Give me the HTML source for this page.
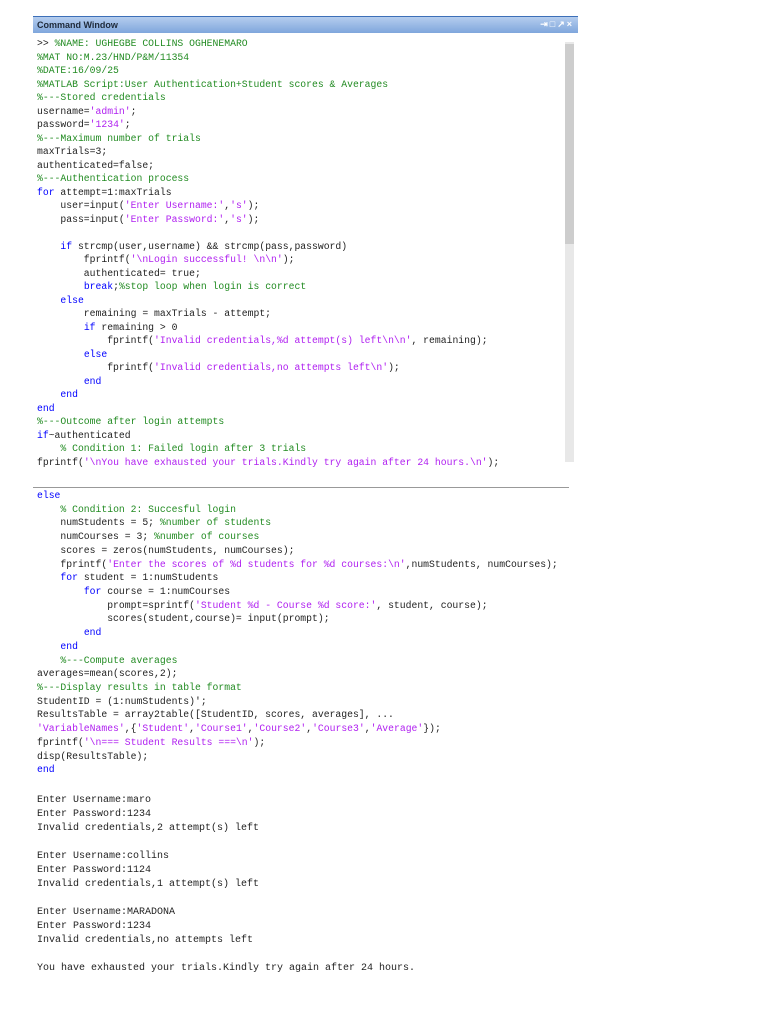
<!DOCTYPE html>
<html><head><meta charset="utf-8"><style>
body{margin:0;background:#fff;width:768px;height:1024px;position:relative;overflow:hidden;font-family:"Liberation Mono",monospace;}
.l{position:absolute;left:37px;font-size:9.75px;white-space:pre;color:#222;line-height:12px;}
.o{font-size:10px;}
.c{color:#228b22}.s{color:#b020f0}.k{color:#0000ff}
#hdr{position:absolute;left:33px;top:16px;width:545px;height:17px;background:linear-gradient(#b5cdee,#7fa6dc);border-top:1px solid #3d6fb8;box-sizing:border-box;font-family:"Liberation Sans",sans-serif;font-size:9px;font-weight:bold;color:#1e2a3a;padding:3px 0 0 4px;}
#ic{position:absolute;right:4px;top:2px;color:#fff;font-size:9px;letter-spacing:2px}
#sb{position:absolute;left:565px;top:42px;width:9px;height:420px;background:#e8e8e8}
#th{position:absolute;left:565px;top:44px;width:9px;height:200px;background:#cdcdcd}
#b2{position:absolute;left:33px;top:487px;width:536px;height:0;border-top:1px solid #999}
</style></head><body>
<div id="hdr">Command Window<span id="ic">⇥□↗×</span></div>
<div id="sb"></div><div id="th"></div>
<div id="b2"></div>
<div class="l" style="top:38px">&gt;&gt; <span class="c">%NAME: UGHEGBE COLLINS OGHENEMARO</span></div>
<div class="l c" style="top:51.5px">%MAT NO:M.23/HND/P&amp;M/11354</div>
<div class="l c" style="top:65px">%DATE:16/09/25</div>
<div class="l c" style="top:78.5px">%MATLAB Script:User Authentication+Student scores &amp; Averages</div>
<div class="l c" style="top:92px">%---Stored credentials</div>
<div class="l" style="top:105.5px">username=<span class="s">'admin'</span>;</div>
<div class="l" style="top:119px">password=<span class="s">'1234'</span>;</div>
<div class="l c" style="top:132.5px">%---Maximum number of trials</div>
<div class="l" style="top:146px">maxTrials=3;</div>
<div class="l" style="top:159.5px">authenticated=false;</div>
<div class="l c" style="top:173px">%---Authentication process</div>
<div class="l" style="top:186.5px"><span class="k">for</span> attempt=1:maxTrials</div>
<div class="l" style="top:200px">    user=input(<span class="s">'Enter Username:'</span>,<span class="s">'s'</span>);</div>
<div class="l" style="top:213.5px">    pass=input(<span class="s">'Enter Password:'</span>,<span class="s">'s'</span>);</div>
<div class="l" style="top:240.5px">    <span class="k">if</span> strcmp(user,username) &amp;&amp; strcmp(pass,password)</div>
<div class="l" style="top:254px">        fprintf(<span class="s">'\nLogin successful! \n\n'</span>);</div>
<div class="l" style="top:267.5px">        authenticated= true;</div>
<div class="l" style="top:281px">        <span class="k">break</span>;<span class="c">%stop loop when login is correct</span></div>
<div class="l" style="top:294.5px">    <span class="k">else</span></div>
<div class="l" style="top:308px">        remaining = maxTrials - attempt;</div>
<div class="l" style="top:321.5px">        <span class="k">if</span> remaining &gt; 0</div>
<div class="l" style="top:335px">            fprintf(<span class="s">'Invalid credentials,%d attempt(s) left\n\n'</span>, remaining);</div>
<div class="l" style="top:348.5px">        <span class="k">else</span></div>
<div class="l" style="top:362px">            fprintf(<span class="s">'Invalid credentials,no attempts left\n'</span>);</div>
<div class="l" style="top:375.5px">        <span class="k">end</span></div>
<div class="l" style="top:389px">    <span class="k">end</span></div>
<div class="l" style="top:402.5px"><span class="k">end</span></div>
<div class="l c" style="top:416px">%---Outcome after login attempts</div>
<div class="l" style="top:429.5px"><span class="k">if</span>~authenticated</div>
<div class="l" style="top:443px">    <span class="c">% Condition 1: Failed login after 3 trials</span></div>
<div class="l" style="top:456.5px">fprintf(<span class="s">'\nYou have exhausted your trials.Kindly try again after 24 hours.\n'</span>);</div>

<div class="l" style="top:490px"><span class="k">else</span></div>
<div class="l" style="top:503.7px">    <span class="c">% Condition 2: Succesful login</span></div>
<div class="l" style="top:517.4px">    numStudents = 5; <span class="c">%number of students</span></div>
<div class="l" style="top:531px">    numCourses = 3; <span class="c">%number of courses</span></div>
<div class="l" style="top:544.8px">    scores = zeros(numStudents, numCourses);</div>
<div class="l" style="top:558.5px">    fprintf(<span class="s">'Enter the scores of %d students for %d courses:\n'</span>,numStudents, numCourses);</div>
<div class="l" style="top:572.2px">    <span class="k">for</span> student = 1:numStudents</div>
<div class="l" style="top:586px">        <span class="k">for</span> course = 1:numCourses</div>
<div class="l" style="top:599.7px">            prompt=sprintf(<span class="s">'Student %d - Course %d score:'</span>, student, course);</div>
<div class="l" style="top:613.4px">            scores(student,course)= input(prompt);</div>
<div class="l" style="top:627px">        <span class="k">end</span></div>
<div class="l" style="top:640.8px">    <span class="k">end</span></div>
<div class="l" style="top:654.5px">    <span class="c">%---Compute averages</span></div>
<div class="l" style="top:668.2px">averages=mean(scores,2);</div>
<div class="l c" style="top:682px">%---Display results in table format</div>
<div class="l" style="top:695.7px">StudentID = (1:numStudents)';</div>
<div class="l" style="top:709.4px">ResultsTable = array2table([StudentID, scores, averages], ...</div>
<div class="l" style="top:723px"><span class="s">'VariableNames'</span>,{<span class="s">'Student'</span>,<span class="s">'Course1'</span>,<span class="s">'Course2'</span>,<span class="s">'Course3'</span>,<span class="s">'Average'</span>});</div>
<div class="l" style="top:736.8px">fprintf(<span class="s">'\n=== Student Results ===\n'</span>);</div>
<div class="l" style="top:750.5px">disp(ResultsTable);</div>
<div class="l" style="top:764.2px"><span class="k">end</span></div>

<div class="l o" style="top:795px">Enter Username:maro</div>
<div class="l o" style="top:809px">Enter Password:1234</div>
<div class="l o" style="top:823px">Invalid credentials,2 attempt(s) left</div>
<div class="l o" style="top:851px">Enter Username:collins</div>
<div class="l o" style="top:865px">Enter Password:1124</div>
<div class="l o" style="top:879px">Invalid credentials,1 attempt(s) left</div>
<div class="l o" style="top:907px">Enter Username:MARADONA</div>
<div class="l o" style="top:921px">Enter Password:1234</div>
<div class="l o" style="top:935px">Invalid credentials,no attempts left</div>
<div class="l o" style="top:963px">You have exhausted your trials.Kindly try again after 24 hours.</div>
</body></html>
